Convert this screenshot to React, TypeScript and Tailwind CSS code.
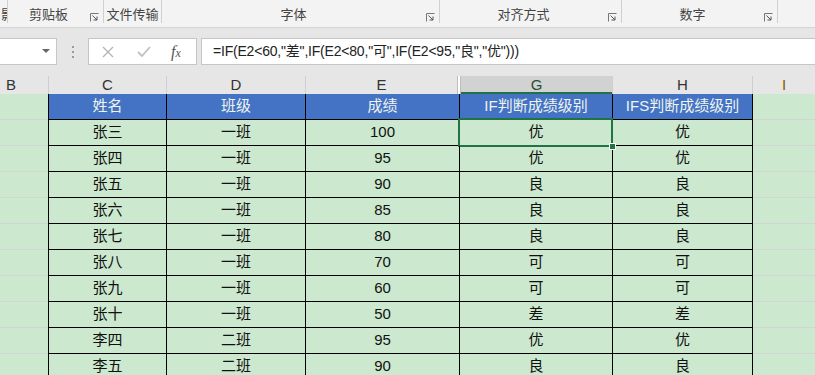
import React from "react";

const font = { fontFamily: '"Liberation Sans", "Noto Sans CJK SC", sans-serif' };

const rows = [
  ["张三", "一班", "100", "优", "优"],
  ["张四", "一班", "95", "优", "优"],
  ["张五", "一班", "90", "良", "良"],
  ["张六", "一班", "85", "良", "良"],
  ["张七", "一班", "80", "良", "良"],
  ["张八", "一班", "70", "可", "可"],
  ["张九", "一班", "60", "可", "可"],
  ["张十", "一班", "50", "差", "差"],
  ["李四", "二班", "95", "优", "优"],
  ["李五", "二班", "90", "良", "良"],
];

function Launcher() {
  return (
    <svg width="9" height="9" viewBox="0 0 9 9" className="absolute right-[4px] bottom-[1px]">
      <path d="M0.5 8.5V0.5H8.5" fill="none" stroke="#777" strokeWidth="1" />
      <path d="M2.5 2.5L7 7M7 3.5V7H3.5" fill="none" stroke="#555" strokeWidth="1" />
    </svg>
  );
}

function Group({ w, label, launcher }: { w: string; label: string; launcher?: boolean }) {
  return (
    <div className={`relative h-[23px] flex items-end justify-center border-r border-[#d0d0d0] ${w} ${launcher ? "pr-[14px]" : ""}`}>
      <span className="text-[13px] leading-[18px] text-[#444] -mb-[1px]">{label}</span>
      {launcher && <Launcher />}
    </div>
  );
}

export default function App() {
  return (
    <div className="w-[815px] h-[375px] overflow-hidden bg-[#e6e6e6] relative" style={font}>
      {/* ribbon group labels */}
      <div className="h-[28px] bg-[#f3f3f3] border-b border-[#d5d5d5] flex items-start">
        <div className="w-[8px] h-[23px] overflow-hidden border-r border-[#d0d0d0] flex items-end justify-end">
          <span className="text-[13px] leading-[18px] text-[#444] -mb-[1px] -mr-[7px]">影</span>
        </div>
        <Group w="w-[96px]" label="剪贴板" launcher />
        <Group w="w-[58px]" label="文件传输" />
        <Group w="w-[278px]" label="字体" launcher />
        <Group w="w-[182px]" label="对齐方式" launcher />
        <Group w="w-[156px]" label="数字" launcher />
      </div>

      {/* formula bar */}
      <div className="h-[48px] pt-[10px] flex items-start">
        <div className="w-[57px] h-[27px] bg-white border border-l-0 border-[#c6c6c6] flex items-center justify-end pr-[6px]">
          <svg width="8" height="5" viewBox="0 0 8 5"><path d="M0 0H8L4 4Z" fill="#666" /></svg>
        </div>
        <div className="w-[31px] h-[27px] flex flex-col items-center justify-center gap-[3px]">
          <span className="w-[2px] h-[2px] bg-[#9a9a9a]" />
          <span className="w-[2px] h-[2px] bg-[#9a9a9a]" />
          <span className="w-[2px] h-[2px] bg-[#9a9a9a]" />
        </div>
        <div className="w-[109px] h-[27px] bg-white border border-[#c6c6c6] flex items-center">
          <svg width="12" height="12" viewBox="0 0 12 12" className="ml-[13px]">
            <path d="M1 1L11 11M11 1L1 11" stroke="#b4b4b4" strokeWidth="1.3" />
          </svg>
          <svg width="14" height="11" viewBox="0 0 14 11" className="ml-[23px]">
            <path d="M1 6L5 10L13 1" fill="none" stroke="#c0c0c0" strokeWidth="1.8" />
          </svg>
          <span className="ml-[20px] text-[16px] italic text-[#555] leading-none" style={{ fontFamily: '"Liberation Serif", serif' }}>
            f<span className="text-[12px]">x</span>
          </span>
        </div>
        <div className="ml-[4px] flex-1 h-[27px] bg-white border border-r-0 border-[#c6c6c6] flex items-center pl-[11px]">
          <span className="text-[14px] text-[#222] whitespace-nowrap tracking-[-0.2px]">=IF(E2&lt;60,"差",IF(E2&lt;80,"可",IF(E2&lt;95,"良","优")))</span>
        </div>
      </div>

      {/* column headers */}
      <div className="h-[18px] flex text-[15px] leading-[18px] text-[#333] bg-[#e6e6e6]">
        <div className="w-[48px] pl-[6px]">B</div>
        <div className="w-[118px] border-l border-[#cfcfcf] text-center">C</div>
        <div className="w-[139px] border-l border-[#cfcfcf] text-center">D</div>
        <div className="w-[152px] border-l border-[#cfcfcf] text-center">E</div>
        <div className="w-[4px] border-l border-r border-[#bdbdbd] bg-white" />
        <div className="w-[151px] bg-[#d2d2d2] border-b-2 border-[#217346] text-center text-[#1f4f36]">G</div>
        <div className="w-[140px] border-l border-[#cfcfcf] text-center">H</div>
        <div className="flex-1 border-l border-[#cfcfcf] text-center text-[#8a5a00]">I</div>
      </div>

      {/* sheet */}
      <div className="bg-[#cce8cf] text-[15px] text-[#111]">
        <div className="h-[26px] flex">
          <div className="w-[48px] border-b border-[#d4d4d4]" />
          <div className="w-[118px] border-l border-b border-black bg-[#4472c4] text-[#eef5ee] flex items-center justify-center">姓名</div>
          <div className="w-[139px] border-l border-b border-black bg-[#4472c4] text-[#eef5ee] flex items-center justify-center">班级</div>
          <div className="w-[154px] border-l border-b border-black bg-[#4472c4] text-[#eef5ee] flex items-center justify-center">成绩</div>
          <div className="w-[153px] border-l border-b border-black bg-[#4472c4] text-[#eef5ee] flex items-center justify-center">IF判断成绩级别</div>
          <div className="w-[141px] border-l border-r border-b border-black bg-[#4472c4] text-[#eef5ee] flex items-center justify-center">IFS判断成绩级别</div>
          <div className="flex-1 border-b border-[#d4d4d4]" />
        </div>
        {rows.map((r, i) => (
          <div key={i} className="h-[26px] flex">
            <div className="w-[48px] border-b border-[#d4d4d4]" />
            <div className="w-[118px] border-l border-b border-black flex items-center justify-center">{r[0]}</div>
            <div className="w-[139px] border-l border-b border-black flex items-center justify-center">{r[1]}</div>
            <div className="w-[154px] border-l border-b border-black flex items-center justify-center">{r[2]}</div>
            <div className="relative w-[153px] border-l border-b border-black flex items-center justify-center">
              {r[3]}
              {i === 0 && (
                <>
                  <div className="absolute -left-[2px] -top-[2px] -right-[1px] -bottom-[2px] border-2 border-[#217346]" />
                  <div className="absolute -right-[4px] -bottom-[5px] w-[7px] h-[7px] bg-[#217346] border border-white" />
                </>
              )}
            </div>
            <div className="w-[141px] border-l border-r border-b border-black flex items-center justify-center">{r[4]}</div>
            <div className="flex-1 border-b border-[#d4d4d4]" />
          </div>
        ))}
      </div>
    </div>
  );
}
